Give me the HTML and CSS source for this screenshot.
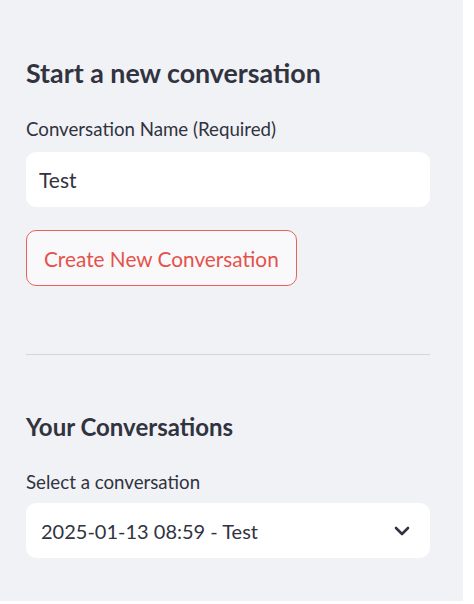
FILE: index.html
```html
<!DOCTYPE html>
<html>

<head>
  <title>conversations</title>
  <meta name="viewport" content="width=device-width, initial-scale=1">
  <link rel="stylesheet" href="styles.css">
</head>

<body>
  <div class="sidebar">
    <h3 class="title">Start a new conversation</h3>

    <label class="field-label">Conversation Name (Required)</label>
    <div class="text-input">Test</div>

    <button class="btn-outline">Create New Conversation</button>

    <hr class="divider">

    <h4 class="subtitle">Your Conversations</h4>

    <label class="field-label select-label">Select a conversation</label>
    <div class="select-box">
      <span>2025-01-13 08:59 - Test</span>
      <svg class="chevron" width="16" height="10" viewBox="0 0 16 10">
        <path d="M2 2 L8 8 L14 2" fill="none" stroke="#31333f" stroke-width="2.6" stroke-linecap="round" stroke-linejoin="round"/>
      </svg>
    </div>
  </div>
</body>

</html>
```

FILE: styles.css
```css
* {
    box-sizing: border-box;
}

body {
    margin: 0;
    background: #ffffff;
    font-family: Lato, "Noto Sans", sans-serif;
    color: #31333f;
}

.sidebar {
    width: 463px;
    height: 601px;
    background: #f0f2f6;
    padding: 56px 33px 0 26px;
    display: flex;
    flex-direction: column;
}

.title {
    margin: 0;
    font-size: 26.8px;
    font-weight: 700;
    line-height: 34px;
}

.subtitle {
    margin: 57px 0 0 0;
    font-size: 24px;
    font-weight: 700;
    line-height: 30px;
}

.field-label {
    font-size: 18.7px;
    line-height: 24px;
    margin-top: 27px;
}

.select-label {
    margin-top: 28px;
}

.text-input,
.select-box {
    margin-top: 11px;
    height: 55px;
    background: #ffffff;
    border-radius: 10px;
    font-size: 21px;
    display: flex;
    align-items: center;
}

.text-input {
    padding-left: 13px;
}

.select-box {
    margin-top: 9px;
    padding: 0 20px 0 15px;
    justify-content: space-between;
    font-size: 20px;
}

.btn-outline {
    align-self: flex-start;
    margin-top: 23px;
    height: 56px;
    padding: 0 17px;
    border: 1px solid #e8625a;
    border-radius: 10px;
    background: #f9f9fb;
    color: #e5524a;
    font-family: inherit;
    font-size: 20.8px;
}

.divider {
    margin: 68px 0 0 0;
    border: 0;
    border-top: 1px solid #d3d5da;
}
```
